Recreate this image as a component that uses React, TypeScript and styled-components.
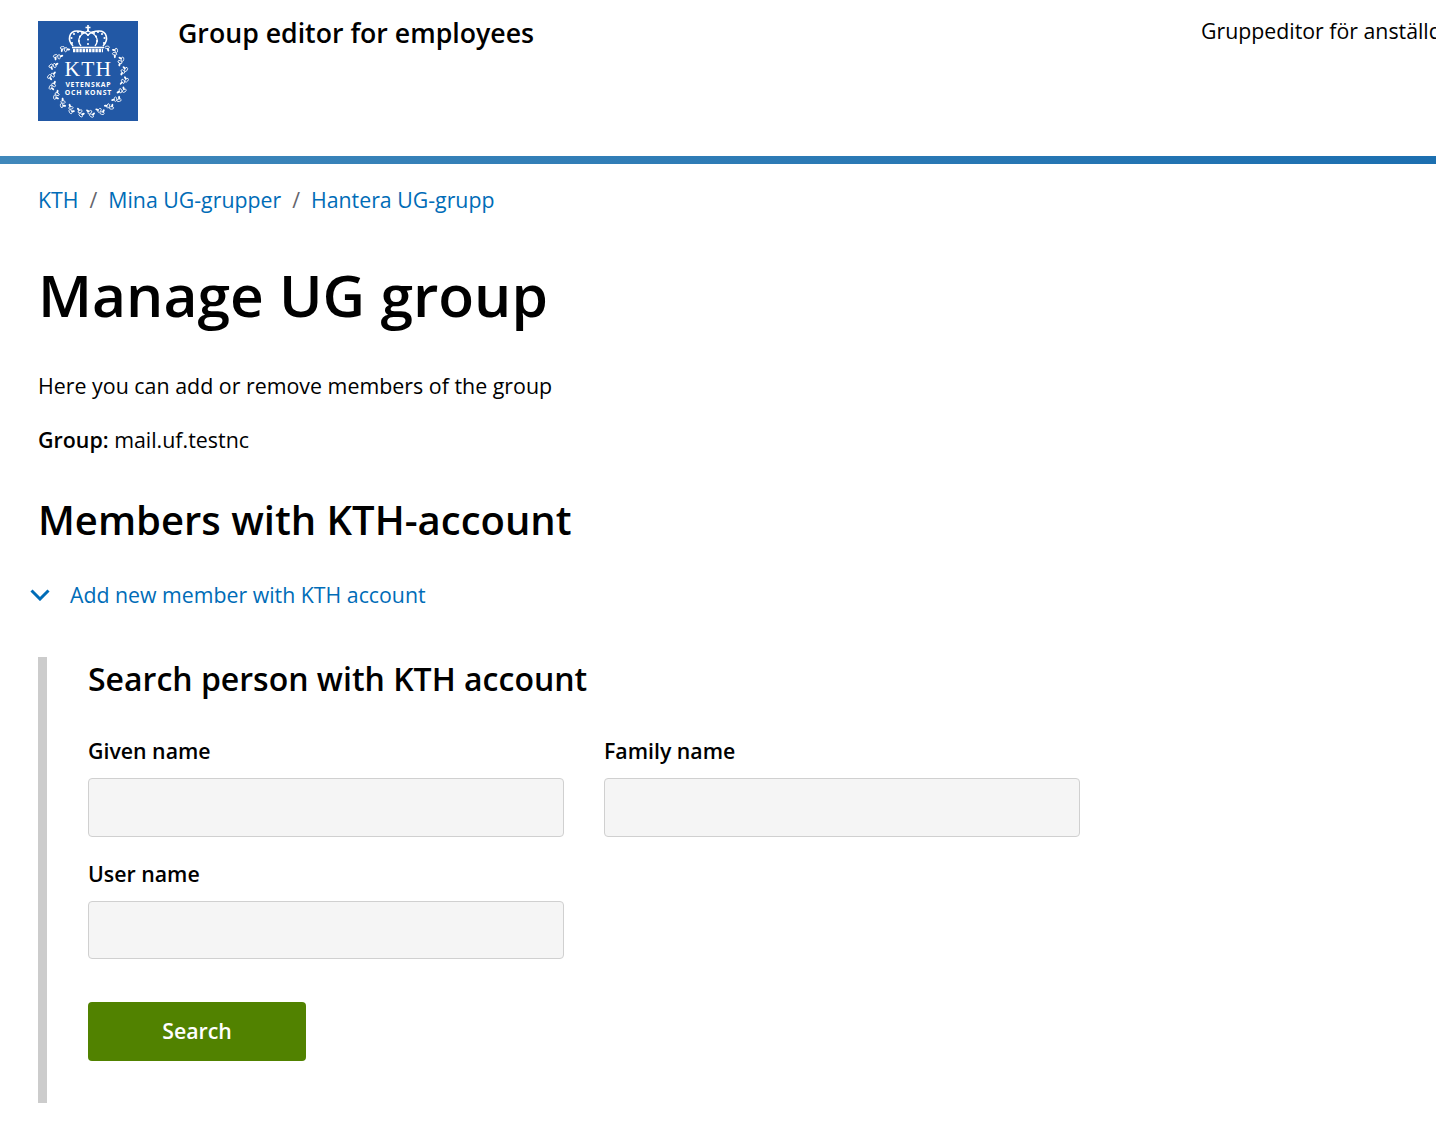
import styled, { createGlobalStyle } from "styled-components";

const GlobalStyle = createGlobalStyle`
  html, body {
    margin: 0;
    padding: 0;
    background: #fff;
    overflow: hidden;
  }
  body {
    font-family: "Open Sans", "Liberation Sans", sans-serif;
    color: #000;
  }
`;

// leaf clusters of the wreath, going round from the crown on both sides
const leaves = Array.from({ length: 37 }, (_, i) => {
  const deg = 36 + i * 8;
  const a = (deg * Math.PI) / 180;
  const r = i % 2 ? 39 : 35.5;
  return { deg, x: 50 + r * Math.sin(a), y: 56 - r * Math.cos(a), flip: i % 2 ? 1 : -1 };
});

const crownPearls = [
  [34, 22], [33.5, 17], [36, 13], [40, 11], [44, 12], [56, 12], [60, 11], [64, 13], [66.5, 17], [66, 22],
  [41, 20], [42, 15.5], [46, 11.5], [54, 11.5], [58, 15.5], [59, 20], [50, 9.5], [50, 14], [50, 18.5], [50, 23],
];

function KthLogo() {
  return (
    <svg width="100" height="100" viewBox="0 0 100 100" aria-label="KTH">
      <rect width="100" height="100" fill="#2258a5" />
      {leaves.map((l, i) => (
        <g key={i} transform={`translate(${l.x} ${l.y}) rotate(${l.deg})`} fill="none" stroke="#fff" strokeWidth="0.8">
          <ellipse cx={l.flip * 1.6} cy="-1" rx="2.2" ry="1.3" transform={`rotate(${l.flip * 40})`} />
          <ellipse cx={-l.flip * 1.2} cy="1.2" rx="1.8" ry="1" fill="#fff" stroke="none" transform={`rotate(${-l.flip * 35})`} />
        </g>
      ))}
      <g fill="none" stroke="#fff">
        <path d="M35 25C29 19 31 10 39 10c5 0 8 1 11 4 3-3 6-4 11-4 8 0 10 9 4 15" strokeWidth="1.6" />
        <path d="M43 25c-4-5-3-11 7-15 10 4 11 10 7 15" strokeWidth="1.3" />
        <path d="M50 10V4M47.5 6.5h5" strokeWidth="1.6" />
        <path d="M34 26.5h32" strokeWidth="1.6" />
        <path d="M35 29.5h30" strokeWidth="3.4" strokeDasharray="2.4 .8" />
      </g>
      <g fill="#fff">
        {crownPearls.map(([x, y], i) => (
          <circle key={i} cx={x} cy={y} r="1.05" />
        ))}
      </g>
      <text x="50.4" y="55" textAnchor="middle" fontFamily="Liberation Serif, serif" fontSize="21.5" fill="#fff" letterSpacing="1.2">
        KTH
      </text>
      <text x="50.4" y="66" textAnchor="middle" fontFamily="Open Sans, sans-serif" fontWeight="700" fontSize="6.9" fill="#fff" letterSpacing="0.75">
        VETENSKAP
      </text>
      <text x="50.4" y="73.5" textAnchor="middle" fontFamily="Open Sans, sans-serif" fontWeight="700" fontSize="6.9" fill="#fff" letterSpacing="0.75">
        OCH KONST
      </text>
    </svg>
  );
}

function App() {
  return (
    <>
      <GlobalStyle />
      <Page>
        <Header>
          <KthLogo />
          <AppTitle>Group editor for employees</AppTitle>
          <LangLink>Gruppeditor för anställda</LangLink>
        </Header>
        <Bar />
        <Main>
          <Breadcrumbs>
            <Crumb>KTH</Crumb>
            <Slash>/</Slash>
            <Crumb>Mina UG-grupper</Crumb>
            <Slash>/</Slash>
            <Crumb>Hantera UG-grupp</Crumb>
          </Breadcrumbs>
          <H1>Manage UG group</H1>
          <Intro>Here you can add or remove members of the group</Intro>
          <GroupLine>
            <strong>Group:</strong> mail.uf.testnc
          </GroupLine>
          <H2>Members with KTH-account</H2>
          <Collapse>
            <svg width="20" height="12" viewBox="0 0 20 12" fill="none">
              <path d="M1.5 1.5l8.5 8.5 8.5-8.5" stroke="#006cb7" strokeWidth="3" />
            </svg>
            Add new member with KTH account
          </Collapse>
          <Panel>
            <H3>Search person with KTH account</H3>
            <FormGrid>
              <Field>
                <Label>Given name</Label>
                <Input />
              </Field>
              <Field>
                <Label>Family name</Label>
                <Input />
              </Field>
              <Field>
                <Label>User name</Label>
                <Input />
              </Field>
            </FormGrid>
            <SearchButton>Search</SearchButton>
          </Panel>
        </Main>
      </Page>
    </>
  );
}

export default App;

const Page = styled.div`
  width: 1436px;
  height: 1144px;
  overflow: hidden;
`;

const Header = styled.header`
  height: 156px;
  box-sizing: border-box;
  padding: 21px 0 0 38px;
  display: flex;
  align-items: flex-start;
`;

const AppTitle = styled.div`
  margin-left: 40px;
  font-size: 26.7px;
  font-weight: 600;
  line-height: 24px;
  white-space: nowrap;
`;

const LangLink = styled.div`
  margin-left: auto;
  flex: 0 0 235px;
  min-width: 0;
  font-size: 21.3px;
  line-height: 20px;
  white-space: nowrap;
`;

const Bar = styled.div`
  height: 8px;
  background: linear-gradient(90deg, #4088bb, #1c6fb0);
`;

const Main = styled.main`
  padding: 0 0 0 38px;
`;

const Breadcrumbs = styled.nav`
  display: flex;
  gap: 11px;
  padding-top: 21px;
  font-size: 21.3px;
  line-height: 29px;
`;

const Crumb = styled.a`
  color: #006cb7;
`;

const Slash = styled.span`
  color: #65656c;
`;

const H1 = styled.h1`
  margin: 42px 0 0;
  font-size: 58.7px;
  font-weight: 600;
  line-height: 76px;
`;

const Intro = styled.p`
  margin: 39px 0 0;
  font-size: 21.4px;
  line-height: 30px;
`;

const GroupLine = styled.p`
  margin: 24px 0 0;
  font-size: 21.4px;
  line-height: 30px;

  strong {
    font-weight: 600;
  }
`;

const H2 = styled.h2`
  margin: 38px 0 0;
  font-size: 40px;
  font-weight: 600;
  line-height: 54px;
`;

const Collapse = styled.a`
  display: flex;
  align-items: center;
  gap: 20px;
  margin: 33px 0 0 -8px;
  color: #006cb7;
  font-size: 21.3px;
  line-height: 30px;
`;

const Panel = styled.section`
  margin-top: 47px;
  height: 446px;
  box-sizing: border-box;
  border-left: 9px solid #cccccc;
  padding-left: 41px;
`;

const H3 = styled.h3`
  margin: 0;
  font-size: 32px;
  font-weight: 600;
  line-height: 44px;
`;

const FormGrid = styled.div`
  display: grid;
  grid-template-columns: 476px 476px;
  column-gap: 40px;
  row-gap: 22px;
  margin-top: 35px;
`;

const Field = styled.div`
  display: flex;
  flex-direction: column;
`;

const Label = styled.label`
  font-size: 21.3px;
  font-weight: 600;
  line-height: 30px;
  margin-bottom: 12px;
`;

const Input = styled.input`
  height: 58.5px;
  box-sizing: border-box;
  background: #f5f5f5;
  border: 1px solid #d0d0d0;
  border-radius: 4px;
`;

const SearchButton = styled.button`
  display: block;
  width: 218px;
  height: 59px;
  margin-top: 43px;
  padding: 0 0 2px;
  background: #518200;
  border: 0;
  border-radius: 4px;
  color: #fff;
  font-family: inherit;
  font-size: 21.3px;
  font-weight: 600;
`;
